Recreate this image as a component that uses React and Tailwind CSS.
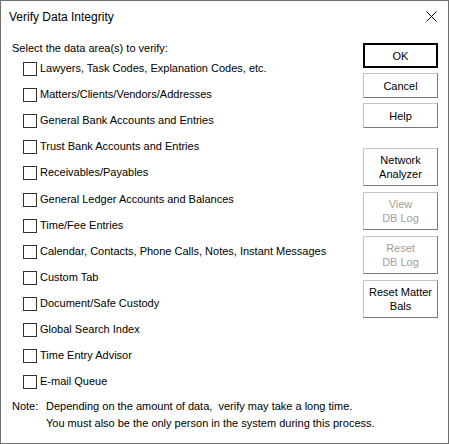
const areas = [
  "Lawyers, Task Codes, Explanation Codes, etc.",
  "Matters/Clients/Vendors/Addresses",
  "General Bank Accounts and Entries",
  "Trust Bank Accounts and Entries",
  "Receivables/Payables",
  "General Ledger Accounts and Balances",
  "Time/Fee Entries",
  "Calendar, Contacts, Phone Calls, Notes, Instant Messages",
  "Custom Tab",
  "Document/Safe Custody",
  "Global Search Index",
  "Time Entry Advisor",
  "E-mail Queue",
];

const Btn = ({ children, def, disabled, tall }) => (
  <button
    className={
      "w-[75px] bg-white text-[11px] leading-[14px] " +
      (tall ? "h-[38px] " : "h-[25px] ") +
      (def
        ? "border-2 border-black "
        : "border border-[#c4c4c4] border-r-[#7a7a7a] border-b-[#7a7a7a] ") +
      (disabled ? "text-[#a0a0a0]" : "text-black")
    }
  >
    {children}
  </button>
);

export default function App() {
  return (
    <div
      className="w-[449px] h-[444px] bg-white border border-[#6f6f6f] flex flex-col text-black overflow-hidden"
      style={{ fontFamily: '"Liberation Sans", Arial, sans-serif' }}
    >
      {/* title bar */}
      <div className="h-[31px] shrink-0 flex items-center justify-between pl-[8px] pr-[10px]">
        <span className="text-[12px]">Verify Data Integrity</span>
        <svg width="11" height="11" viewBox="0 0 11 11" className="mr-[1px]">
          <path d="M0.5 0.5L10.5 10.5M10.5 0.5L0.5 10.5" stroke="#000" strokeWidth="1" />
        </svg>
      </div>

      <div className="flex">
        {/* left side */}
        <div className="flex-1 pl-[11px] pt-[10px] text-[11px]">
          <div className="leading-[13px]">Select the data area(s) to verify:</div>
          <div className="mt-[1px] pl-[11px]">
            {areas.map((a) => (
              <label key={a} className="flex items-center h-[26.1px]">
                <span className="w-[14px] h-[14px] border border-[#333] bg-white shrink-0" />
                <span className="ml-[3px] leading-[13px] -mt-[1px]">{a}</span>
              </label>
            ))}
          </div>
        </div>

        {/* right side buttons */}
        <div className="w-[85px] pt-[11px] flex flex-col items-start gap-[5px]">
          <Btn def>OK</Btn>
          <Btn>Cancel</Btn>
          <Btn>Help</Btn>
          <div className="mt-[15px] flex flex-col gap-[6px]">
            <Btn tall>Network<br />Analyzer</Btn>
            <Btn tall disabled>View<br />DB Log</Btn>
            <Btn tall disabled>Reset<br />DB Log</Btn>
            <Btn tall>Reset Matter<br />Bals</Btn>
          </div>
        </div>
      </div>

      <div className="pl-[11px] mt-[3px] text-[11px] leading-[17px] flex whitespace-nowrap">
        <span className="w-[34px] shrink-0">Note:</span>
        <div>
          <div>Depending on the amount of data,&nbsp; verify may take a long time.</div>
          <div>You must also be the only person in the system during this process.</div>
        </div>
      </div>
    </div>
  );
}
